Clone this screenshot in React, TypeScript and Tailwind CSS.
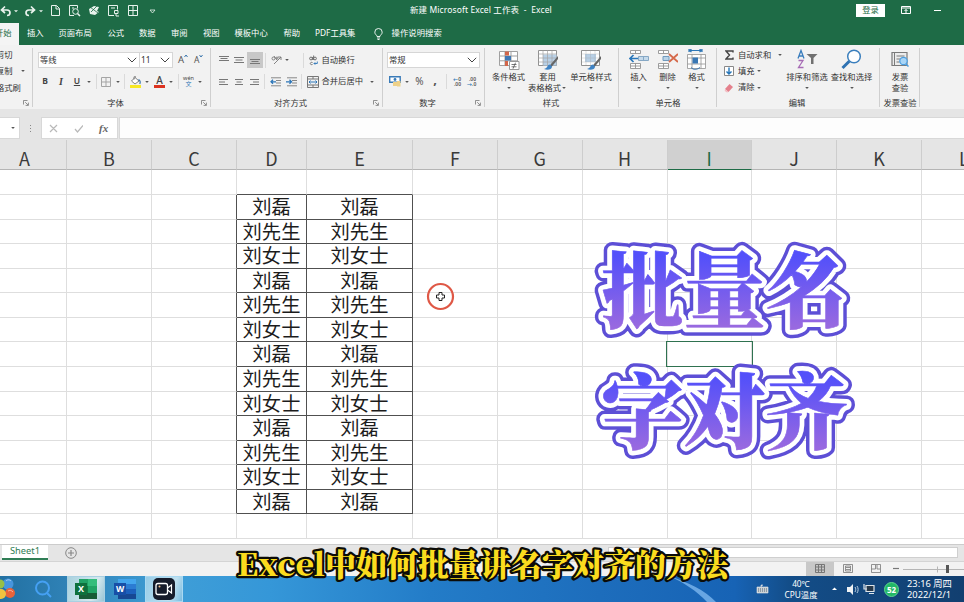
import type { ReactNode } from 'react';

const COLUMNS = ['A', 'B', 'C', 'D', 'E', 'F', 'G', 'H', 'I', 'J', 'K', 'L'];
const NAMES = ['刘磊', '刘先生', '刘女士'];
const ROWS = Array.from({ length: 15 }, (_, i) => i);

const gridCols =
  'grid grid-cols-[67px_85px_85px_70px_106px_85px_84.5px_85px_84.5px_85px_85px_85px] w-[1007px]';

interface ChildrenProps {
  children?: ReactNode;
  className?: string;
}

interface GroupProps extends ChildrenProps {
  title: string;
  launcher?: boolean;
  labelClass?: string;
}

const Caret = ({ className = '' }: { className?: string }) => (
  <svg className={`w-[6px] h-[4px] shrink-0 ${className}`} viewBox="0 0 6 4">
    <path d="M1.2 1h3.6L3 3z" fill="#555" />
  </svg>
);

const Sep = ({ className = '' }: { className?: string }) => (
  <div className={`w-px h-[15px] bg-[#dadada] shrink-0 ${className}`} />
);

const Group = ({ title, launcher, className, labelClass = '', children }: GroupProps) => (
  <section
    className={`relative flex flex-col shrink-0 h-16 ${className}`}
  >
    <div className="flex flex-col h-[52px]">{children}</div>
    <div className={`h-3 leading-3 text-center whitespace-nowrap ${labelClass}`}>{title}</div>
    {launcher && (
      <svg className="absolute right-[4px] bottom-[3px] w-[6px] h-[6px]" viewBox="0 0 6 6">
        <path d="M.5 4.5v-4h4M2.2 2.2l3 3M5.4 2.6v2.8H2.6" fill="none" stroke="#777" strokeWidth=".8" />
      </svg>
    )}
    <div className="absolute right-0 top-[3px] bottom-[2px] w-px bg-[#cfcfcf]" />
  </section>
);

const Field = ({ children, className }: ChildrenProps) => (
  <div
    className={`flex items-center justify-between h-[16px] bg-white border border-[#d6d6d6] pl-[1px] pr-[2px] shrink-0 ${className}`}
  >
    <span>{children}</span>
    <svg className="w-[10px] h-[6px]" viewBox="0 0 10 6">
      <path d="M.8.8 5 5 9.2.8" fill="none" stroke="#444" strokeWidth="1" />
    </svg>
  </div>
);

const Lines = ({ d, className = '' }: { d: string; className?: string }) => (
  <svg className={`w-[10px] h-[10px] shrink-0 ${className}`} viewBox="0 0 10 10">
    <path d={d} fill="none" stroke="#777" strokeWidth="1" />
  </svg>
);

const BigButton = ({
  icon,
  label,
  second,
  caret,
  className,
}: {
  icon: ReactNode;
  label: string;
  second?: string;
  caret?: boolean;
  className: string;
}) => (
  <div className={`flex flex-col items-center shrink-0 whitespace-nowrap ${className}`}>
    <div className="mt-[4px] h-[22px]">{icon}</div>
    <span className="leading-[12px]">{label}</span>
    <div className="flex items-center h-[10px] leading-[10px]">
      {second}
      {caret && <Caret />}
    </div>
  </div>
);

const ConditionIcon = () => (
  <svg width="22" height="22" viewBox="0 0 22 22">
    <path d="M1.5 2.5h18v14h-18zM1.5 7h18M1.5 11.8h18M7 2.5v14M13 2.5v14" fill="#fff" stroke="#a0a0a0" />
    <path d="M7 2.5h4v4H7zM7 12h3v5H7z" fill="#d2664a" />
    <path d="M7 7h6v4.500H7z" fill="#3f78b5" />
    <path d="M11.500 12.500h9.500v8h-9.500z" fill="#fff" stroke="#999" />
    <path d="M13.500 15.500h5M13.500 17.800h5M17.500 13.700l-2.500 6" stroke="#555" strokeWidth=".8" />
  </svg>
);

const TableStyleIcon = ({ cell }: { cell?: boolean }) => (
  <svg width="22" height="22" viewBox="0 0 22 22">
    <path d="M1.500 1.500h18v15h-18z" fill="#fff" stroke="#929292" />
    <path d={cell ? 'M5 5h11v8H5z' : 'M6 5.500h13.500v11H6z'} fill="#b8d0e6" />
    <path d="M1.500 5h18M1.500 9h18M1.500 13h18M6 1.500v15M10.500 1.500v15M15 1.500v15" stroke="#a3a3a3" strokeWidth=".7" opacity={cell ? 0.45 : 1} />
    <path d="m21 7-7 8-1.500 2 2 1 6.500-8z" fill="#666" />
    <path d="M13 15.500c-3 0-2 3.500-6 4.500 3 1.500 8 1 8-2.500z" fill="#3f83c4" />
  </svg>
);

const InsertIcon = () => (
  <svg width="20" height="22" viewBox="0 0 20 22">
    <path d="M1.500 1.500h10v3h-10zM6.500 1.500v3M1.500 14.500h10v5h-10zM6.500 14.500v5M1.500 17h10" fill="#fff" stroke="#929292" strokeWidth=".9" />
    <path d="M9.500 7.500h10v4h-10z" fill="#c5daeb" stroke="#86a8c5" />
    <path d="M14.500 7.500v4" stroke="#86a8c5" />
    <path d="M9 9.500H1M4.500 6 1 9.500 4.500 13" fill="none" stroke="#2b78bb" strokeWidth="1.700" />
  </svg>
);

const DeleteIcon = () => (
  <svg width="20" height="22" viewBox="0 0 20 22">
    <path d="M.5 1.500h10v3H.5zM5.500 1.500v3M.5 14.500h10v5H.5zM5.500 14.500v5M.5 17h10" fill="#fff" stroke="#929292" strokeWidth=".9" />
    <path d="M5 7.500h6v4H5z" fill="#b9d3e8" stroke="#719abd" />
    <path d="m11 5 9 8M20 5l-9 8" stroke="#d5694a" strokeWidth="1.800" />
  </svg>
);

const FormatIcon = () => (
  <svg width="20" height="22" viewBox="0 0 20 22">
    <path d="M2 1.500h13M2 0v3M15 0v3M4.500 0 2.500 1.500l2 1.500M12.500 0l2 1.500-2 1.500" fill="none" stroke="#2f77b7" strokeWidth="1.200" />
    <path d="M.5 5.500h18v14H.5zM.5 9h18M.5 15h18M5 5.500v14M14 5.500v14" fill="#fff" stroke="#929292" strokeWidth=".8" />
    <path d="M5.500 8.500h5.500v6H5.500z" fill="#3977b4" />
    <path d="M4 18.500c3 3 6 2 9 0" stroke="#3977b4" fill="none" />
  </svg>
);

const TitleBar = () => (
  <header className="flex items-center h-[22px] text-white shrink-0">
    <svg className="w-[160px] h-[22px] shrink-0" viewBox="0 0 160 22" fill="none" stroke="#e8f2ec" strokeWidth="1">
      <path d="M1.500 10h5.500c4 0 4 5.500 0 5.500M5 6.500 1.500 10 5 13" strokeWidth="1.700" />
      <path d="M34.500 10H29c-4 0-4 5.500 0 5.500M31 6.500l3.500 3.500L31 13" strokeWidth="1.700" />
      <path d="M14 10.200h4l-2 2zM39 10.200h4l-2 2z" fill="#e8f2ec" stroke="none" />
      <path d="M51.500 5.500h5l3 3v7h-8zM56 5.500v3.500h3.500" />
      <path d="M74 15.500h-4.500v-10h8v3M72 8h2" />
      <circle cx="75.500" cy="11.500" r="2.800" />
      <path d="m77.500 13.500 2.500 2.500" strokeWidth="1.500" />
      <path d="M89 9l5-3 5 1-2 4 2 1-4 3-5-1z" fill="#e8f2ec" stroke="none" />
      <path d="m90 7 8 6M91 12l6-6" stroke="#1e6b46" strokeWidth=".8" />
      <path d="M114 15.500h-5.500v-10h9v4M111 8h4" />
      <path d="M114.500 10.500h3.500v3h-3.500zM116 13.500v2.500h3" />
      <path d="M128.500 5.500h9v10h-9zM133 5.500v10M128.500 10.500h9" />
      <path d="M150 10h5l-2.500 3z" strokeWidth=".8" />
    </svg>
    <span className="ml-[250px] w-[143px] text-[8.500px] leading-none whitespace-nowrap -mt-[2px] tracking-[0.100px]">
      新建 Microsoft Excel 工作表&nbsp; -&nbsp; Excel
    </span>
    <div className="ml-[303px] w-[29px] h-[13px] bg-white text-[#1e6b46] text-[8.3px] leading-[12px] text-center -mt-[1px]">
      登录
    </div>
    <svg className="ml-[16px] w-[54px] h-[10px] -mt-[2px]" viewBox="0 0 54 10" fill="none" stroke="#fff">
      <path d="M.5 1.500h9v7h-9zM.5 3h9M5 8V4.500M3.500 6 5 4.500 6.500 6" />
      <path d="M33 5.500h7" />
    </svg>
  </header>
);

const TABS = [
  { label: '插入', className: 'ml-[8px] w-[17px]' },
  { label: '页面布局', className: 'ml-[14.500px] w-[34px]' },
  { label: '公式', className: 'ml-[15px] w-[17px]' },
  { label: '数据', className: 'ml-[14.500px] w-[17px]' },
  { label: '审阅', className: 'ml-[15px] w-[17px]' },
  { label: '视图', className: 'ml-[15px] w-[17px]' },
  { label: '模板中心', className: 'ml-[14.500px] w-[34px]' },
  { label: '帮助', className: 'ml-[15px] w-[17px]' },
  { label: 'PDF工具集', className: 'ml-[14.500px] w-[42px]' },
];

const TabBar = () => (
  <nav className="flex items-center h-[23px] text-white text-[8.3px] whitespace-nowrap shrink-0">
    <div className="w-[19px] h-[22px] mt-[1px] bg-[#f4f4f4] text-[#1e6b46] leading-[20px] overflow-hidden shrink-0">
      <span className="-ml-[5px]">开始</span>
    </div>
    {TABS.map((tab) => (
      <span key={tab.label} className={`shrink-0 ${tab.className}`}>
        {tab.label}
      </span>
    ))}
    <svg className="ml-[17px] w-[9px] h-[12px]" viewBox="0 0 9 12" fill="none" stroke="#fff" strokeWidth=".9">
      <path d="M3 8.500C3 7 .8 6.500.8 4.200a3.700 3.700 0 0 1 7.400 0C8.200 6.500 6 7 6 8.500zM3 10h3M3.500 11.500h2" />
    </svg>
    <span className="ml-[8.500px] tracking-[0.100px]">操作说明搜索</span>
  </nav>
);

const FontGroup = () => (
  <Group title="字体" launcher className="w-[178px]" labelClass="pr-[13px]">
    <div className="flex items-center mt-[7px] h-[16px]">
      <Field className="ml-[5px] w-[102px]">等线</Field>
      <Field className="w-[34px] -ml-px">11</Field>
      <span className="flex ml-[5px] w-[12px] text-[9.500px] leading-[12px] text-[#555]">
        A
        <svg className="w-[4px] h-[4px]" viewBox="0 0 4 4"><path d="M.5 3 2 1l1.500 2" fill="none" stroke="#3875ad" /></svg>
      </span>
      <span className="flex ml-[4px] w-[12px] text-[8.500px] leading-[12px] text-[#555]">
        A
        <svg className="w-[4px] h-[4px]" viewBox="0 0 4 4"><path d="M.5 1 2 3l1.500-2" fill="none" stroke="#3875ad" /></svg>
      </span>
    </div>
    <div className="flex items-center mt-[5px] h-[17px] text-[8.5px] text-[#444]">
      <b className="ml-[7px] w-[10px] text-center">B</b>
      <i className="ml-[6px] w-[10px] text-center text-[10px] font-bold font-['Liberation_Serif',serif]">I</i>
      <u className="ml-[6px] w-[10px] text-center font-semibold">U</u>
      <Caret className="ml-[3.500px]" />
      <Sep className="ml-[4px]" />
      <svg className="ml-[4.500px] w-[10px] h-[10px]" viewBox="0 0 10 10" fill="none" stroke="#a5a5a5">
        <path d="M.5.5h9v9h-9zM5 .5v9M.5 5h9" />
      </svg>
      <Caret className="ml-[4px]" />
      <Sep className="ml-[3px]" />
      <svg className="ml-[5px] w-[11px] h-[12px]" viewBox="0 0 11 12">
        <path d="M5 1.500 9 5 5 8 1.500 5zM4 3.500V.8h2" fill="#fff" stroke="#666" strokeWidth=".8" />
        <path d="M8.500 3.500c2 1 2 3 1.200 4.500" stroke="#3875ad" fill="none" strokeWidth="1.200" />
        <path d="M0 9h11v3H0z" fill="#f7e826" />
      </svg>
      <Caret className="ml-[3px]" />
      <span className="ml-[4px] w-[11px] h-[13px] border-b-[3px] border-[#dc3320] text-center text-[10px] leading-[10px] font-medium">
        A
      </span>
      <Caret className="ml-[3px]" />
      <Sep className="ml-[4px]" />
      <span className="flex flex-col items-center ml-[4px] w-[11px] text-[5.500px] leading-[5px]">
        wén
        <span className="text-[#3478b8] text-[6px] leading-[7px]">文</span>
      </span>
      <Caret className="ml-[3px]" />
    </div>
  </Group>
);

const AlignGroup = () => (
  <Group title="对齐方式" launcher className="w-[172px]" labelClass="pr-[13px]">
    <div className="flex items-center mt-[7px] h-[16px]">
      <Lines className="ml-[7.500px]" d="M0 1.500h10M1.500 3.500h7M0 5.500h10" />
      <Lines className="ml-[5.500px]" d="M0 2.500h10M1.500 5h7M0 7.500h10" />
      <div className="flex items-center justify-center ml-[3px] w-[16px] h-[16px] bg-[#c8c8c8]">
        <Lines d="M0 4.500h10M1.500 6.500h7M0 8.500h10" />
      </div>
      <Sep className="ml-[1.500px]" />
      <svg className="ml-[5px] w-[11px] h-[10px]" viewBox="0 0 11 10" fill="none" stroke="#777" strokeWidth=".9">
        <path d="m3 9 7-7M7 2h3v3" />
        <circle cx="2.500" cy="3.500" r="1.500" />
        <path d="m3 1 3 4" />
        <circle cx="6" cy="3" r="1" />
      </svg>
      <Caret className="ml-[2px]" />
      <Sep className="ml-[13px]" />
      <svg className="ml-[5.500px] w-[9px] h-[11px]" viewBox="0 0 9 11" fill="none" stroke="#666" strokeWidth=".9">
        <circle cx="2" cy="3.500" r="1.400" />
        <circle cx="6" cy="3.500" r="1.400" />
        <path d="M3.400 2v3M4.600.5V5M3.500 7.500c-3-1-3 3 0 2" />
        <path d="M8.300 6.500v2H5M6.200 7.300 5 8.500l1.200 1.200" stroke="#2c76b8" />
      </svg>
      <span className="ml-[3.500px]">自动换行</span>
    </div>
    <div className="flex items-center mt-[5px] h-[17px]">
      <Lines className="ml-[7.500px]" d="M0 2.500h9M0 5h6M0 7.500h9" />
      <Lines className="ml-[5.500px]" d="M1 2.500h8M2.500 5h5M1 7.500h8" />
      <Lines className="ml-[5.500px]" d="M0 2.500h9M3 5h6M0 7.500h9" />
      <Sep className="ml-[4.500px]" />
      <svg className="ml-[5px] w-[11px] h-[10px]" viewBox="0 0 11 10" fill="none" stroke="#888">
        <path d="M1 .8h10M6 3.500h5M6 6h5M1 8.800h10" />
        <path d="M6 4.800H.8M3 2.800l-2 2 2 2" stroke="#2c76b8" strokeWidth="1.300" />
      </svg>
      <svg className="ml-[5px] w-[11px] h-[10px]" viewBox="0 0 11 10" fill="none" stroke="#888">
        <path d="M1 .8h10M6 3.500h5M6 6h5M1 8.800h10" />
        <path d="M0 4.800h5.500M3.500 2.800l2 2-2 2" stroke="#2c76b8" strokeWidth="1.300" />
      </svg>
      <Sep className="ml-[4px]" />
      <svg className="ml-[4.500px] w-[12px] h-[12px]" viewBox="0 0 12 12" fill="none" stroke="#777">
        <path d="M.5.5h11v11H.5zM.5 3h11M.5 9h11M6 .5V3M6 9v2.500" />
        <path d="M2 6h8M3.500 4.500 2 6l1.500 1.500M8.500 4.500 10 6 8.500 7.500" stroke="#2c76b8" />
      </svg>
      <span className="ml-[3px]">合并后居中</span>
      <Caret className="ml-[5.500px]" />
    </div>
  </Group>
);

const NumberGroup = () => (
  <Group title="数字" launcher className="w-[102px]" labelClass="pr-[13px]">
    <div className="flex items-center mt-[7px] h-[16px]">
      <Field className="ml-[4px] w-[93px]">常规</Field>
    </div>
    <div className="flex items-center mt-[5px] h-[17px] text-[#555]">
      <svg className="ml-[6px] w-[12px] h-[11px]" viewBox="0 0 12 11">
        <path d="M.7.700h10.500v5.500H.7z" fill="#fff" stroke="#3a7bb8" strokeWidth="1.400" />
        <circle cx="6" cy="3.500" r="1.400" fill="#3a7bb8" />
        <path d="M4 6h4v4H4zM8 5h3.500v5.500H8z" fill="#eed189" />
      </svg>
      <Caret className="ml-[3px]" />
      <span className="ml-[4px] w-[11px] text-center text-[10px]">%</span>
      <b className="ml-[6px] w-[8px] text-center text-[13px] leading-[6px] -mt-[6px]">,</b>
      <Sep className="ml-[7px]" />
      <span className="ml-[5px] w-[9px] text-[5px] leading-[5px] text-right font-semibold">
        <span className="text-[#2c76b8]">←</span>0<br />.00
      </span>
      <span className="ml-[6px] w-[9px] text-[5px] leading-[5px] text-right font-semibold">
        .00<br /><span className="text-[#2c76b8]">→</span>.0
      </span>
    </div>
  </Group>
);

const EditGroup = () => (
  <Group title="编辑" className="w-[163px]" labelClass="pr-[3px]">
    <div className="flex">
      <div className="flex flex-col mt-[2px] w-[68px] shrink-0 whitespace-nowrap">
        <div className="flex items-center h-[16px]">
          <svg className="ml-[8px] w-[9px] h-[10px]" viewBox="0 0 9 10">
            <path d="M8 2.500V1H1l3.500 4L1 9h7V7.500" fill="none" stroke="#444" strokeWidth="1.400" />
          </svg>
          <span className="ml-[4px]">自动求和</span>
          <Caret className="ml-[6px]" />
        </div>
        <div className="flex items-center h-[16px]">
          <svg className="ml-[7px] w-[10px] h-[10px]" viewBox="0 0 10 10" fill="none">
            <path d="M.5.5h9v9h-9z" fill="#fff" stroke="#888" />
            <path d="M5 1.500V8M2.500 5.500 5 8l2.500-2.500" stroke="#2374b8" strokeWidth="1.400" />
          </svg>
          <span className="ml-[4px]">填充</span>
          <Caret className="ml-[1px]" />
        </div>
        <div className="flex items-center h-[17px]">
          <svg className="ml-[7px] w-[10px] h-[10px]" viewBox="0 0 10 10">
            <path d="m5.500 1 3.500 3-4.500 5L1 6z" fill="#e4808c" />
            <path d="m1 6 3.500 3-1.500.500L.7 8z" fill="#f3bcc2" />
          </svg>
          <span className="ml-[4px]">清除</span>
          <Caret className="ml-[1px]" />
        </div>
      </div>
      <BigButton
        className="w-[44px]"
        label="排序和筛选"
        caret
        icon={
          <svg width="22" height="22" viewBox="0 0 22 22">
            <path d="M2 9.500 5 1.500l3 8M3 7h4" fill="none" stroke="#397dbd" strokeWidth="1.300" />
            <path d="M2.500 11.500H7l-4.500 7H7.500" fill="none" stroke="#a66bb5" strokeWidth="1.300" />
            <path d="M10.500 5h11L17.500 9v6h-2.500V9z" fill="#717171" />
          </svg>
        }
      />
      <BigButton
        className="w-[45px]"
        label="查找和选择"
        caret
        icon={
          <svg width="22" height="22" viewBox="0 0 22 22">
            <path d="m8.500 12-7 7" stroke="#2f73b3" strokeWidth="3" />
            <circle cx="13" cy="7.500" r="6.300" fill="#fff" stroke="#3b7fbd" strokeWidth="1.500" />
          </svg>
        }
      />
    </div>
  </Group>
);

const Ribbon = () => (
  <div className="flex h-16 bg-[#f2f2f2] text-[8.3px] text-[#333] whitespace-nowrap shrink-0">
    <Group title="" launcher className="w-[33px]">
      <div className="flex flex-col pt-[2px] -ml-[4px]">
        <span className="h-[16px] leading-[16px]">剪切</span>
        <span className="flex items-center h-[16px]">
          复制
          <Caret className="ml-[7px]" />
        </span>
        <span className="h-[17px] leading-[17px]">格式刷</span>
      </div>
    </Group>
    <FontGroup />
    <AlignGroup />
    <NumberGroup />
    <Group title="样式" className="w-[134px]" labelClass="pr-[2px]">
      <div className="flex">
        <BigButton className="ml-[1px] w-[45px]" label="条件格式" icon={<ConditionIcon />} caret />
        <BigButton className="w-[33px]" label="套用" second="表格格式" icon={<TableStyleIcon />} caret />
        <BigButton className="ml-[5px] w-[44px]" label="单元格样式" icon={<TableStyleIcon cell />} caret />
      </div>
    </Group>
    <Group title="单元格" className="w-[98px]">
      <div className="flex">
        <BigButton className="ml-[5px] w-[29px]" label="插入" icon={<InsertIcon />} caret />
        <BigButton className="w-[29px]" label="删除" icon={<DeleteIcon />} caret />
        <BigButton className="w-[29px]" label="格式" icon={<FormatIcon />} caret />
      </div>
    </Group>
    <EditGroup />
    <Group title="发票查验" className="w-[40px]">
      <BigButton
        className="w-full"
        label="发票"
        second="查验"
        icon={
          <svg width="18" height="22" viewBox="0 0 18 22">
            <path d="M1 3.500h15v13H1z" fill="#ececec" stroke="#7a7a7a" strokeWidth="1.200" />
            <path d="M3.500 3.500v13M5.500 7h8M5.500 10h4M5.500 13h3" stroke="#7a7a7a" />
            <circle cx="12.500" cy="12" r="3.700" fill="#a9d5f6" stroke="#4b9ee0" strokeWidth="1.200" />
            <path d="m15 15 2.500 2.500" stroke="#4b9ee0" strokeWidth="1.500" />
          </svg>
        }
      />
    </Group>
  </div>
);

const FormulaBar = () => (
  <div className="flex h-[31px] pt-[8px] bg-[#e5e5e5] shrink-0">
    <div className="flex items-center justify-end w-[20px] h-[22px] pr-[3px] bg-white border border-l-0 border-[#d8d8d8]">
      <Caret />
    </div>
    <div className="flex flex-col justify-center gap-[2px] w-[21px] pl-[10px] h-[22px]">
      <i className="w-px h-px bg-[#888]" />
      <i className="w-px h-px bg-[#888]" />
      <i className="w-px h-px bg-[#888]" />
    </div>
    <div className="flex items-center w-[77px] h-[22px] bg-white border border-[#d8d8d8]">
      <svg className="ml-[7px] w-[34px] h-[9px]" viewBox="0 0 34 9" fill="none" stroke="#b9b9b9" strokeWidth="1.200">
        <path d="m1 1 7 7M8 1 1 8M26 5l2.500 3L34 1.500" />
      </svg>
      <span className="ml-[16px] text-[11px] leading-none italic font-bold text-[#666] font-['Liberation_Serif',serif]">
        fx
      </span>
    </div>
    <div className="ml-[1px] flex-1 h-[22px] bg-[#fdfdfd] border border-r-0 border-[#d8d8d8]" />
  </div>
);

const SheetGrid = () => (
  <main className="h-[404px] bg-white overflow-hidden shrink-0">
    <div className={`${gridCols} h-[30px] bg-[#e5e5e5] text-[#3a3a3a] text-[18px] font-['Noto_Sans_CJK_SC',sans-serif]`}>
      {COLUMNS.map((col) => (
        <div
          key={col}
          className={`pt-[7px] leading-[22px] text-center border-r border-r-[#cdcdcd] border-b ${
            col === 'I'
              ? 'bg-[#d0d0d0] text-[#1e6b46] border-b-[#1e6b46]'
              : 'border-b-[#b5b5b5]'
          } ${col === 'A' ? 'pr-[17px]' : ''}`}
        >
          {col}
        </div>
      ))}
    </div>
    {ROWS.map((row) => (
      <div key={row} className={`${gridCols} ${row === 0 ? 'h-[25px]' : 'h-[24.570px]'}`}>
        {COLUMNS.map((col, i) => {
          const filled = (i === 3 || i === 4) && row > 0 && row < 14;
          const dark = (i === 3 || i === 4) && row < 14;
          const darkRight = i > 1 && i < 5 && row > 0 && row < 14;
          return (
            <div
              key={col}
              className={`text-center text-[19.300px] leading-[23.500px] text-[#1c1c1c] border-r border-b ${
                darkRight ? 'border-r-[#505050]' : 'border-r-[#dedede]'
              } ${dark ? 'border-b-[#505050]' : 'border-b-[#dedede]'}`}
            >
              {filled && NAMES[(row - 1) % 3]}
            </div>
          );
        })}
      </div>
    ))}
  </main>
);

const StatusArea = () => (
  <div className="shrink-0">
    <div className="flex h-[17px] bg-[#e5e5e5] border-t border-[#cccccc]">
      <div className="ml-[2px] w-[46px] h-[15px] bg-white border-b-2 border-[#2f7d55] text-[#2f7d55] text-[9.300px] leading-[11px] text-center">
        Sheet1
      </div>
      <svg className="ml-[17px] mt-[2px] w-[12px] h-[12px]" viewBox="0 0 12 12" fill="none" stroke="#888">
        <circle cx="6" cy="6" r="5.300" />
        <path d="M6 3v6M3 6h6" strokeWidth="1.200" />
      </svg>
      <div className="ml-auto mr-[6px] mt-[2px] w-[350px] h-[11px] bg-white border border-[#cfcfcf]" />
    </div>
    <div className="flex items-center h-[15px] bg-[#f2f2f2] border-t border-[#d4d4d4]">
      <svg className="ml-[806px] w-[158px] h-[14px]" viewBox="0 0 158 14" fill="none" stroke="#777">
        <path d="M0 0h28v14H0z" fill="#c8c8c8" stroke="none" />
        <path d="M9.500 2.500h9v8h-9zM12.500 2.500v8M15.500 2.500v8M9.500 5h9M9.500 8h9" />
        <path d="M37.500 2.500h9v8h-9zM39.500 4h5v5h-5zM40 5.500h4M40 7.500h4" strokeWidth=".8" />
        <path d="M65.500 2.500h9v8h-9zM65.500 7h4v-4M71 3v4h3" strokeWidth=".8" />
        <path d="M87 6.500h6" strokeWidth="1.200" />
        <path d="M97 7.500h61M131.500 4.500v6" stroke="#b5b5b5" />
        <path d="M140 3h3v8h-3z" fill="#555" stroke="none" />
      </svg>
    </div>
  </div>
);

const Taskbar = () => (
  <footer className="flex items-center h-[26px] shrink-0 overflow-hidden text-white bg-[linear-gradient(90deg,#2270a2_0px,#2e80b4_60px,#3f9ed7_170px,#3597d8_270px,#237cc8_430px,#1d6dbc_600px,#1763b5_735px,#134d88_790px,#123f70_964px)]">
    <svg className="w-[16px] h-[26px] shrink-0" viewBox="0 0 16 26">
      <circle cx="8" cy="8" r="5.500" fill="#4795dd" />
      <circle cx="10" cy="17" r="5" fill="#e86339" />
      <circle cx="1" cy="18" r="5" fill="#f0c33f" />
      <circle cx="0" cy="8" r="4.500" fill="#97bf45" />
      <path d="M6 5c2-2 4-1 5 0M8 15c2-1 3-1 5 1" stroke="#fff" opacity=".5" fill="none" />
    </svg>
    <svg className="ml-[18px] w-[19px] h-[19px] shrink-0" viewBox="0 0 19 19" fill="none" stroke="#45a0f3" strokeWidth="2">
      <circle cx="8.500" cy="8" r="6.500" />
      <path d="m13 13 4 4" />
    </svg>
    <div className="flex items-center justify-center ml-[14px] w-[38px] h-[26px] shrink-0 border border-[#a9d0e2] bg-[linear-gradient(110deg,#a9d2df,#d4e9ee_70%,#99c4d5)]">
      <svg className="w-[24px] h-[20px]" viewBox="0 0 24 20">
        <path d="M5 0h18v20H5z" fill="#21a366" />
        <path d="M14 0h9v7h-9z" fill="#34bd7c" />
        <path d="M5 7h9v7H5z" fill="#107c41" />
        <path d="M5 14h18v6H5z" fill="#185c37" />
        <path d="M1 4h12v12H1z" fill="#0f713d" />
        <text x="7" y="13.200" fill="#fff" fontSize="9" fontWeight="700" textAnchor="middle">X</text>
      </svg>
    </div>
    <div className="flex items-center justify-center w-[40px] shrink-0">
      <svg className="w-[24px] h-[20px]" viewBox="0 0 24 20">
        <path d="M5 0h18v5H5z" fill="#43a6ee" />
        <path d="M5 5h18v5H5z" fill="#2b7cd3" />
        <path d="M5 10h18v5H5z" fill="#1c60bc" />
        <path d="M5 15h18v5H5z" fill="#174893" />
        <path d="M1 4h12v12H1z" fill="#174fa7" />
        <text x="7" y="13" fill="#fff" fontSize="8.500" fontWeight="700" textAnchor="middle">W</text>
      </svg>
    </div>
    <div className="flex items-center justify-center w-[38px] h-[26px] shrink-0 border border-[#a9d9f2] bg-[linear-gradient(110deg,#98cde8,#bfe0ef_70%,#79bbe0)]">
      <svg className="w-[22px] h-[22px]" viewBox="0 0 22 22">
        <rect width="22" height="22" rx="5" fill="#151b2a" />
        <rect x="3" y="5.500" width="11.500" height="11" rx="2" fill="none" stroke="#fff" strokeWidth="1.300" />
        <path d="m14.500 10 4-3v8l-4-3" fill="none" stroke="#fff" strokeWidth="1.200" />
        <circle cx="6.500" cy="8.500" r="1" fill="#f6c58d" />
      </svg>
    </div>
    <svg className="ml-[482px] w-[70px] h-[26px] shrink-0" viewBox="0 0 70 26">
      <path d="M4 0c18 6 36 14 47 26h-9C32 15 18 6 4 0z" fill="#83bcf1" opacity=".75" />
    </svg>
    <svg className="ml-[21px] w-[13px] h-[10px] shrink-0" viewBox="0 0 13 10">
      <path d="M1 3h11v6H1zM5 3V1h2" fill="#c9d0d5" stroke="#e6e6e6" strokeWidth=".6" />
      <path d="M2 5h9M2 7h9" stroke="#536575" strokeDasharray="1 1" />
    </svg>
    <div className="flex flex-col ml-[10px] w-[44px] text-[8.300px] leading-[11px] text-center whitespace-nowrap shrink-0">
      <span>40℃</span>
      <span>CPU温度</span>
    </div>
    <svg className="ml-[6px] w-[56px] h-[18px] shrink-0" viewBox="0 0 56 18">
      <path d="M3 10h5L5.500 7.500z" fill="#fff" />
      <path d="M18 7h3l3-3v11l-3-3h-3z" fill="#eef2f5" />
      <path d="M26 7c1 1.500 1 3 0 5M28 6c1.500 2 1.500 5 0 7" stroke="#bcd0e3" fill="none" />
      <path d="M37 5.500h8v6h-8zM40 13.500h5" fill="#26384a" stroke="#dfe5e9" strokeWidth="1.200" />
      <path d="M35 4v5h3" stroke="#dfe5e9" fill="none" strokeWidth="1.200" />
    </svg>
    <div className="-ml-[1px] w-[15px] h-[15px] rounded-full bg-[#22b866] border border-[#5fd492] text-[8px] leading-[13px] text-center font-bold shrink-0">
      52
    </div>
    <div className="flex flex-col ml-[8px] text-[9.300px] leading-[11px] whitespace-nowrap">
      <span>23:16 周四</span>
      <span>2022/12/1</span>
    </div>
  </footer>
);

// decorative lettering laid over the sheet
const WordArt = () => (
  <svg
    className="absolute left-[580px] top-[230px] w-[290px] h-[240px]"
    viewBox="0 0 290 240"
    fontFamily="'Noto Serif CJK SC', 'Noto Serif SC', 'Noto Sans CJK SC', serif"
    fontWeight="900"
    fontSize="82"
    strokeLinejoin="round"
  >
    <defs>
      <linearGradient id="violet" x1="0" y1="0" x2="0" y2="1">
        <stop offset="0.25" stopColor="#5350fa" />
        <stop offset="0.85" stopColor="#9869e0" />
      </linearGradient>
    </defs>
    {[
      { text: '批量名', y: 91 },
      { text: '字对齐', y: 212 },
    ].map(({ text, y }) => (
      <g key={text}>
        <text x="21.500" y={y} textLength="246" fill="#5d4fd6" stroke="#5d4fd6" strokeWidth="17">{text}</text>
        <text x="21.500" y={y} textLength="246" fill="#fff" stroke="#fff" strokeWidth="10">{text}</text>
        <text x="21.500" y={y} textLength="246" fill="url(#violet)" stroke="url(#violet)" strokeWidth=".6">{text}</text>
      </g>
    ))}
  </svg>
);

const Caption = () => (
  <svg
    className="absolute left-[230px] top-[540px] w-[510px] h-[48px]"
    viewBox="0 0 510 48"
    fontFamily="'Noto Serif CJK SC', 'Noto Serif SC', 'Liberation Serif', 'Noto Sans CJK SC', serif"
    fontWeight="900"
    fontSize="31"
    fill="#fbdc1e"
    stroke="#0c0c08"
    strokeWidth="4.500"
    strokeLinejoin="round"
    paintOrder="stroke"
  >
    <text x="7" y="36" textLength="88" lengthAdjust="spacingAndGlyphs">Excel</text>
    <text x="95" y="36" textLength="403">中如何批量讲名字对齐的方法</text>
  </svg>
);

const App = () => (
  <div className="relative flex flex-col w-[964px] h-[602px] overflow-hidden bg-[#1e6b46] font-['Noto_Sans','Noto_Sans_CJK_SC',sans-serif]">
    <TitleBar />
    <TabBar />
    <Ribbon />
    <FormulaBar />
    <SheetGrid />
    <StatusArea />
    <Taskbar />
    {/* active cell */}
    <div className="absolute left-[666px] top-[341px] w-[87px] h-[26px] border border-[#2f7250]" />
    <WordArt />
    {/* cursor */}
    <svg className="absolute left-[426px] top-[282px] w-[29px] h-[29px]" viewBox="0 0 29 29">
      <circle cx="14.500" cy="14.500" r="12.500" fill="none" stroke="#df5846" strokeWidth="2.200" />
      <path d="M13 10.500h3V13h2.500v3H16v2.500h-3V16h-2.500v-3H13z" fill="#fff" stroke="#222" />
    </svg>
    <Caption />
  </div>
);

export default App;
